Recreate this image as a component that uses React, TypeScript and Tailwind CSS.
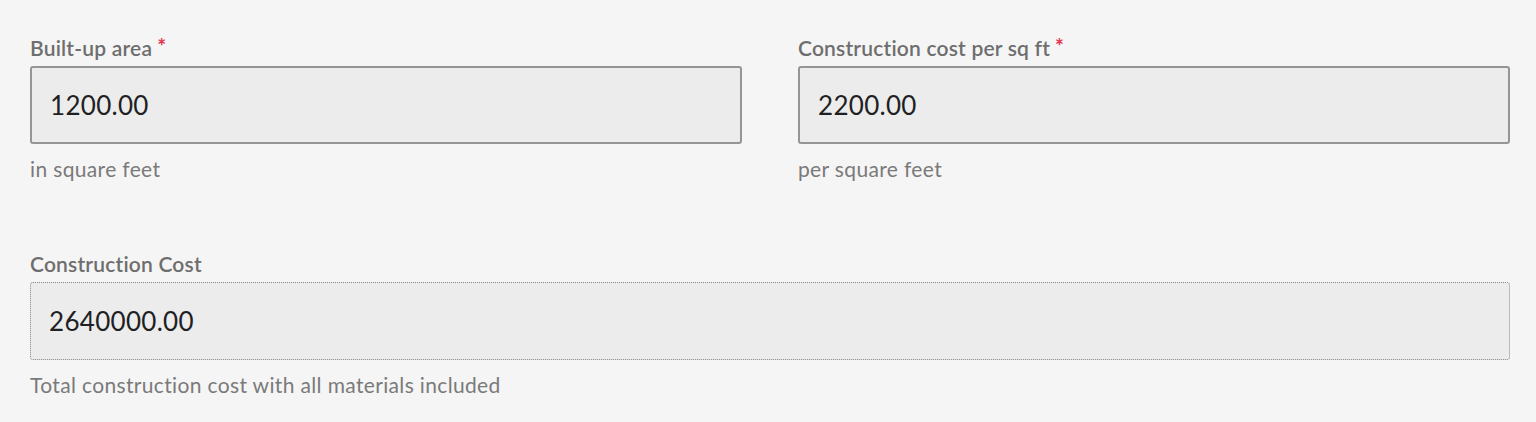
import React from 'react'

type FieldProps = {
  label: string
  value: string
  help: string
  required?: boolean
  readOnly?: boolean
}

function Field({ label, value, help, required, readOnly }: FieldProps) {
  return (
    <div className="flex flex-col">
      <label className="h-[37px] flex items-center text-[21px] font-semibold tracking-[0.2px] text-[#6e6e6e]">
        {label}
        {required && <span className="ml-[5px] -mt-[4px] text-[21px] font-bold text-[#e0334f]">*</span>}
      </label>
      <div
        className={
          readOnly
            ? 'h-[78px] flex items-center px-[18px] rounded-[3px] border border-dotted border-[#858585] bg-[#ececec]'
            : 'h-[78px] flex items-center px-[18px] rounded-[3px] border-2 border-[#959595] bg-[#ececec]'
        }
      >
        <span className="text-[26px] tracking-[0.3px] text-[#1f1f24]">{value}</span>
      </div>
      <p className="mt-[10px] text-[21px] leading-[30px] tracking-[0.35px] text-[#7a7a7a]">{help}</p>
    </div>
  )
}

export default function App() {
  return (
    <div
      className="min-h-[422px] bg-[#f5f5f5] pl-[30px] pr-[26px] pt-[29px]"
      style={{ fontFamily: 'Lato, "Noto Sans", sans-serif' }}
    >
      <div className="grid grid-cols-2 gap-x-[56px]">
        <Field label="Built-up area" value="1200.00" help="in square feet" required />
        <Field label="Construction cost per sq ft" value="2200.00" help="per square feet" required />
      </div>
      <div className="mt-[61px]">
        <Field
          label="Construction Cost"
          value="2640000.00"
          help="Total construction cost with all materials included"
          readOnly
        />
      </div>
    </div>
  )
}
